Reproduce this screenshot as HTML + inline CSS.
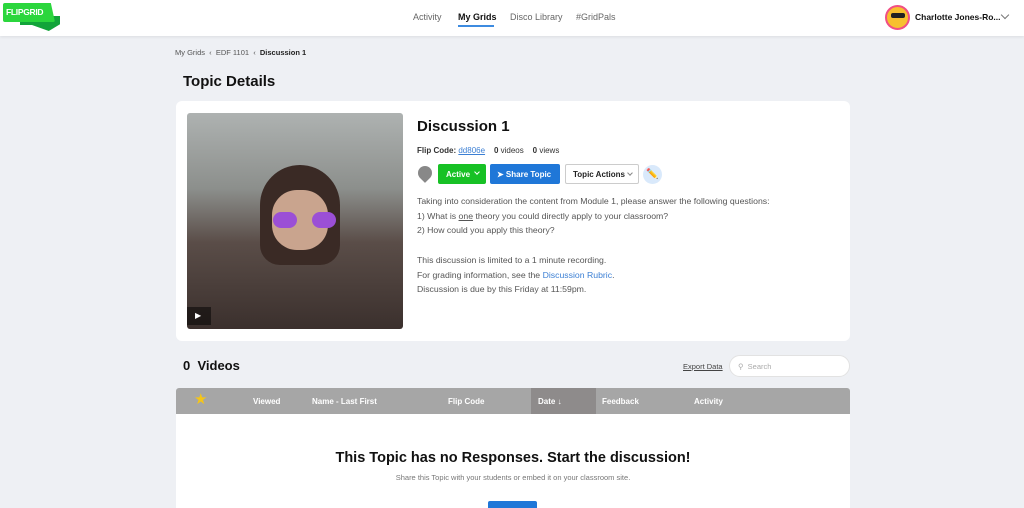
<!DOCTYPE html><html><head><style>
*{margin:0;padding:0;box-sizing:border-box}
body{width:1024px;height:508px;overflow:hidden;background:#eef0f4;font-family:"Liberation Sans",sans-serif;position:relative;color:#222}
.a{position:absolute}
.hdr{left:0;top:0;width:1024px;height:36px;background:#fff;box-shadow:0 1px 3px rgba(0,0,0,.08)}
.nav{font-size:9px;color:#666;top:12px}
.t{font-size:8.7px;color:#555;line-height:14.7px}
</style></head><body>
<div class="a hdr"></div>
<div class="a" style="left:20px;top:16px;width:40px;height:15px;background:#12a43a;clip-path:polygon(0 0,100% 0,100% 55%,72% 100%,30% 60%,0 60%)"></div>
<div class="a" style="left:3px;top:3px;width:52px;height:19px;background:#2bd63d;border-radius:2px;clip-path:polygon(0 0,92% 0,100% 100%,0 100%)"></div>
<div class="a" style="left:6px;top:7px;font-size:8.5px;font-weight:bold;color:#fff;letter-spacing:-.3px">FLIPGRID</div>
<div class="a nav" style="left:413px">Activity</div>
<div class="a nav" style="left:458px;color:#111;font-weight:bold">My Grids</div>
<div class="a" style="left:458px;top:25px;width:36px;height:2px;background:#3d8be0"></div>
<div class="a nav" style="left:510px">Disco Library</div>
<div class="a nav" style="left:576px">#GridPals</div>
<div class="a" style="left:885px;top:5px;width:25px;height:25px;border-radius:50%;background:#f7c02f;border:2px solid #f14f84"></div>
<div class="a" style="left:891px;top:13px;width:14px;height:5px;background:#222;border-radius:2px"></div>
<div class="a" style="left:915px;top:12px;font-size:8.5px;font-weight:bold;color:#111">Charlotte Jones-Ro...</div>
<div class="a" style="left:1002px;top:12px;width:6px;height:6px;border-right:1px solid #777;border-bottom:1px solid #777;transform:rotate(45deg)"></div>
<div class="a" style="left:175px;top:48px;font-size:7.5px;color:#555">My Grids &nbsp;‹&nbsp; EDF 1101 &nbsp;‹&nbsp; <b style="color:#222">Discussion 1</b></div>
<div class="a" style="left:183px;top:73px;font-size:15px;font-weight:bold;color:#111">Topic Details</div>
<div class="a" style="left:176px;top:101px;width:674px;height:240px;background:#fff;border-radius:6px"></div>
<div class="a" style="left:187px;top:113px;width:216px;height:216px;border-radius:3px;background:linear-gradient(180deg,#aeb2b1 0%,#8c8f8c 35%,#5a4d48 60%,#3b302d 100%)"></div>
<div class="a" style="left:260px;top:165px;width:80px;height:100px;border-radius:40px 40px 20px 20px;background:#3a2a25"></div>
<div class="a" style="left:272px;top:190px;width:56px;height:60px;border-radius:25px;background:#c9a48e"></div>
<div class="a" style="left:273px;top:212px;width:24px;height:16px;border-radius:8px;background:#9b4fd6"></div>
<div class="a" style="left:312px;top:212px;width:24px;height:16px;border-radius:8px;background:#9b4fd6"></div>
<div class="a" style="left:187px;top:307px;width:24px;height:18px;background:rgba(0,0,0,.5);color:#fff;font-size:8px;padding:4px 8px">▶</div>
<div class="a" style="left:417px;top:118px;font-size:15px;font-weight:bold;color:#111">Discussion 1</div>
<div class="a" style="left:417px;top:146px;font-size:8px;color:#333"><b>Flip Code:</b> <span style="color:#3b7fd4;text-decoration:underline">dd806e</span> &nbsp;&nbsp; <b>0</b> videos &nbsp;&nbsp; <b>0</b> views</div>
<div class="a" style="left:418px;top:166px;width:14px;height:14px;border-radius:50% 50% 50% 0;transform:rotate(-45deg);background:#888"></div>
<div class="a" style="left:438px;top:164px;width:48px;height:20px;background:#17c125;border-radius:2px;color:#fff;font-size:8px;font-weight:bold;padding:6px 8px">Active</div>
<div class="a" style="left:475px;top:170px;width:4px;height:4px;border-right:1px solid #fff;border-bottom:1px solid #fff;transform:rotate(45deg)"></div>
<div class="a" style="left:490px;top:164px;width:70px;height:20px;background:#1f77d8;border-radius:2px;color:#fff;font-size:8px;font-weight:bold;padding:6px 7px">➤ Share Topic</div>
<div class="a" style="left:565px;top:164px;width:74px;height:20px;background:#fff;border:1px solid #ccc;border-radius:2px;font-size:8px;font-weight:bold;padding:5px 7px">Topic Actions</div>
<div class="a" style="left:628px;top:171px;width:4px;height:4px;border-right:1px solid #888;border-bottom:1px solid #888;transform:rotate(45deg)"></div>
<div class="a" style="left:643px;top:165px;width:19px;height:19px;border-radius:50%;background:#d9e9fb;font-size:10px;text-align:center;line-height:19px">✏️</div>
<div class="a t" style="left:417px;top:194px">Taking into consideration the content from Module 1, please answer the following questions:<br>1) What is <u>one</u> theory you could directly apply to your classroom?<br>2) How could you apply this theory?<br><br>This discussion is limited to a 1 minute recording.<br>For grading information, see the <span style="color:#3b7fd4">Discussion Rubric</span>.<br>Discussion is due by this Friday at 11:59pm.</div>
<div class="a" style="left:183px;top:358px;font-size:13px;font-weight:bold;color:#111">0 &nbsp;Videos</div>
<div class="a" style="left:683px;top:362px;font-size:7.5px;color:#444;text-decoration:underline">Export Data</div>
<div class="a" style="left:729px;top:355px;width:121px;height:22px;background:#fff;border:1px solid #e2e2e2;border-radius:11px;font-size:7.5px;color:#aaa;padding:6px 8px">&#9906; &nbsp;Search</div>
<div class="a" style="left:176px;top:388px;width:674px;height:26px;background:#a6a6a6;border-radius:3px 3px 0 0"></div>
<div class="a" style="left:531px;top:388px;width:65px;height:26px;background:#8e8b8b"></div>
<div class="a" style="left:194px;top:390px;font-size:15px;color:#f5c518">★</div>
<div class="a" style="left:176px;top:397px;width:674px;font-size:8px;font-weight:bold;color:#fff">
<span class="a" style="left:77px">Viewed</span><span class="a" style="left:136px">Name - Last First</span><span class="a" style="left:272px">Flip Code</span><span class="a" style="left:362px">Date ↓</span><span class="a" style="left:426px">Feedback</span><span class="a" style="left:518px">Activity</span></div>
<div class="a" style="left:176px;top:414px;width:674px;height:94px;background:#fff"></div>
<div class="a" style="left:176px;top:450px;width:674px;text-align:center;font-size:14.5px;font-weight:bold;color:#111">This Topic has no Responses. Start the discussion!</div>
<div class="a" style="left:176px;top:473px;width:674px;text-align:center;font-size:7.5px;color:#777">Share this Topic with your students or embed it on your classroom site.</div>
<div class="a" style="left:488px;top:501px;width:49px;height:7px;background:#1f77d8;border-radius:2px 2px 0 0"></div>
</body></html>
